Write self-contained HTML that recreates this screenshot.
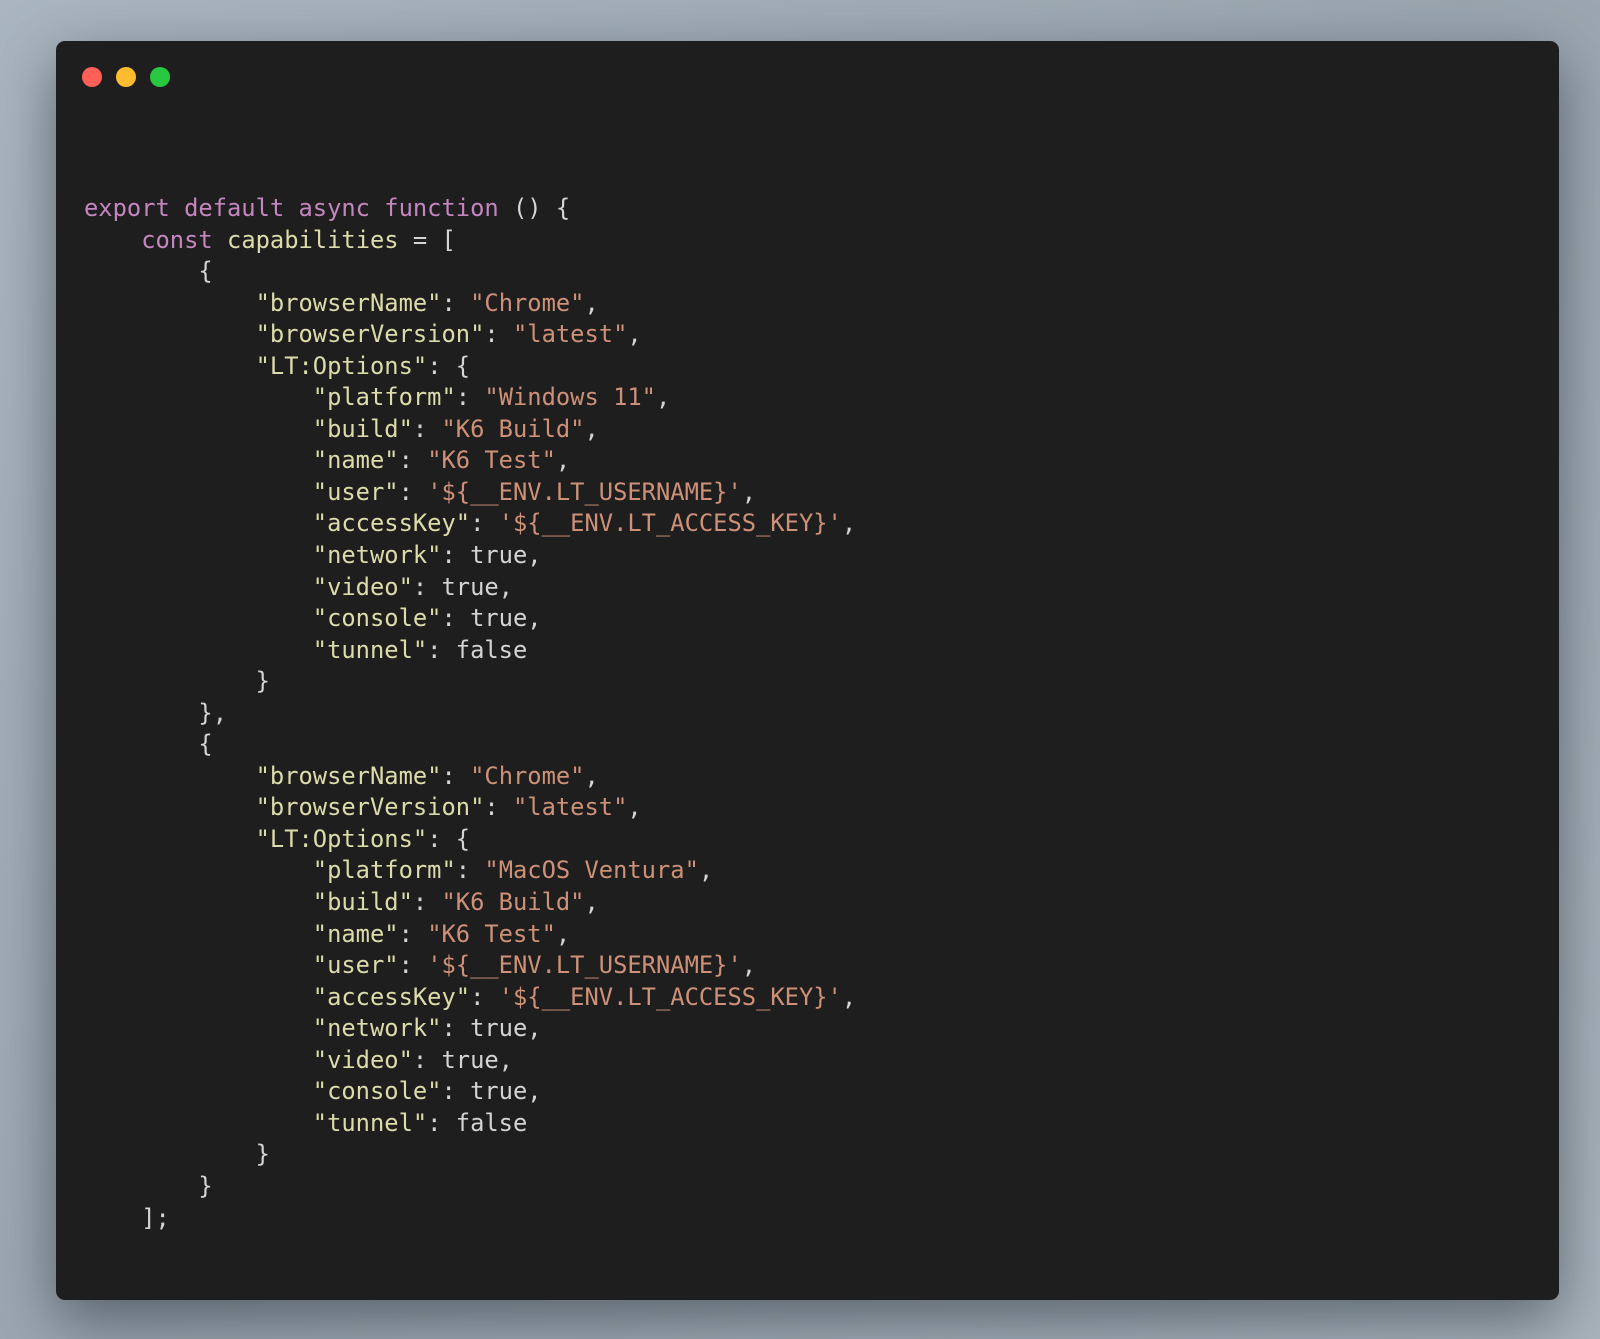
<!DOCTYPE html>
<html><head><meta charset="utf-8"><style>
html,body{margin:0;padding:0;width:1600px;height:1339px;overflow:hidden;background:linear-gradient(135deg,#aab5bf,#9aa5af 50%,#a9b4bd);}
.win{position:absolute;left:56px;top:41px;width:1503px;height:1259px;background:#1e1e1e;border-radius:9px;box-shadow:0 20px 60px rgba(30,40,50,.55);}
.d{position:absolute;top:26px;width:20px;height:20px;border-radius:50%;}
pre{position:absolute;left:28px;top:152px;margin:0;font-family:"DejaVu Sans Mono","Liberation Mono",monospace;font-size:23.75px;line-height:31.55px;color:#d4d4d4;}
.k{color:#c586c0}.y{color:#dcdcaa}.s{color:#ce9178}
</style></head><body>
<div class="win">
<div class="d" style="left:26px;background:#fe5f57"></div>
<div class="d" style="left:60px;background:#febc2e"></div>
<div class="d" style="left:94px;background:#28c840"></div>
<pre><span class="k">export default async function</span> () {
    <span class="k">const</span> <span class="y">capabilities</span> = [
        {
            <span class="y">"browserName"</span>: <span class="s">"Chrome"</span>,
            <span class="y">"browserVersion"</span>: <span class="s">"latest"</span>,
            <span class="y">"LT:Options"</span>: {
                <span class="y">"platform"</span>: <span class="s">"Windows 11"</span>,
                <span class="y">"build"</span>: <span class="s">"K6 Build"</span>,
                <span class="y">"name"</span>: <span class="s">"K6 Test"</span>,
                <span class="y">"user"</span>: <span class="s">'${__ENV.LT_USERNAME}'</span>,
                <span class="y">"accessKey"</span>: <span class="s">'${__ENV.LT_ACCESS_KEY}'</span>,
                <span class="y">"network"</span>: true,
                <span class="y">"video"</span>: true,
                <span class="y">"console"</span>: true,
                <span class="y">"tunnel"</span>: false
            }
        },
        {
            <span class="y">"browserName"</span>: <span class="s">"Chrome"</span>,
            <span class="y">"browserVersion"</span>: <span class="s">"latest"</span>,
            <span class="y">"LT:Options"</span>: {
                <span class="y">"platform"</span>: <span class="s">"MacOS Ventura"</span>,
                <span class="y">"build"</span>: <span class="s">"K6 Build"</span>,
                <span class="y">"name"</span>: <span class="s">"K6 Test"</span>,
                <span class="y">"user"</span>: <span class="s">'${__ENV.LT_USERNAME}'</span>,
                <span class="y">"accessKey"</span>: <span class="s">'${__ENV.LT_ACCESS_KEY}'</span>,
                <span class="y">"network"</span>: true,
                <span class="y">"video"</span>: true,
                <span class="y">"console"</span>: true,
                <span class="y">"tunnel"</span>: false
            }
        }
    ];</pre>
</div>
</body></html>
